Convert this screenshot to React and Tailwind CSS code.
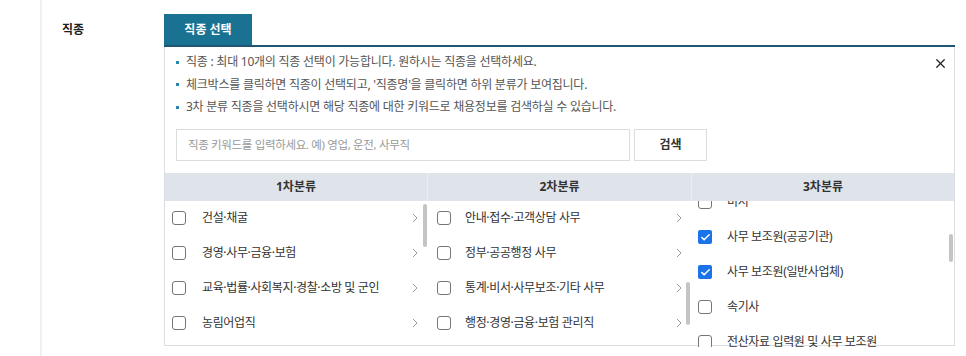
import { Check, X } from 'lucide-react';

const FONT = "font-['Noto_Sans','Noto_Sans_CJK_KR',sans-serif]";

const NOTES = [
  '직종 : 최대 10개의 직종 선택이 가능합니다. 원하시는 직종을 선택하세요.',
  "체크박스를 클릭하면 직종이 선택되고, '직종명'을 클릭하면 하위 분류가 보여집니다.",
  '3차 분류 직종을 선택하시면 해당 직종에 대한 키워드로 채용정보를 검색하실 수 있습니다.',
];

const FIRST = ['건설·채굴', '경영·사무·금융·보험', '교육·법률·사회복지·경찰·소방 및 군인', '농림어업직'];
const SECOND = ['안내·접수·고객상담 사무', '정부·공공행정 사무', '통계·비서·사무보조·기타 사무', '행정·경영·금융·보험 관리직'];
const THIRD = [
  { name: '비서', on: false },
  { name: '사무 보조원(공공기관)', on: true },
  { name: '사무 보조원(일반사업체)', on: true },
  { name: '속기사', on: false },
  { name: '전산자료 입력원 및 사무 보조원', on: false },
];

function Box({ on }) {
  if (on) {
    return (
      <span className="flex h-[14px] w-[14px] shrink-0 items-center justify-center rounded-[2px] bg-[#1a73e8]">
        <Check size={11} strokeWidth={3.5} className="text-white" />
      </span>
    );
  }
  return <span className="h-[14px] w-[14px] shrink-0 rounded-[3px] border border-[#767676] bg-white" />;
}

function Chevron() {
  return (
    <svg width="6" height="10" viewBox="0 0 6 10" className="ml-auto shrink-0">
      <polyline points="1,1 5,5 1,9" fill="none" stroke="#9a9a9a" strokeWidth="1" />
    </svg>
  );
}

function Row({ name, on, chevron, pad, gap }) {
  return (
    <div className={`flex h-[35px] items-center ${pad}`}>
      <Box on={on} />
      <span className={`${gap} whitespace-nowrap text-[12px] tracking-[-0.03em] text-[#333]`}>{name}</span>
      {chevron && <Chevron />}
    </div>
  );
}

export default function App() {
  return (
    <div className={`flex h-[356px] w-[966px] bg-white ${FONT}`}>
      <div className="w-[40px]" />
      <div className="flex flex-1 border-l-2 border-[#eef0f4]">
        <div className="w-[122px] pl-[20px] pt-[21px] text-[12px] font-bold text-[#222]">직종</div>

        <div className="w-[791px] pt-[14px]">
          {/* tab */}
          <div className="border-b-2 border-[#1f5673]">
            <div className="flex h-[31px] w-[88px] items-center justify-center bg-[#1a7292] text-[12px] font-bold text-white">
              직종 선택
            </div>
          </div>

          {/* panel */}
          <div className="relative h-[299px] border-x border-b border-[#dadde2]">
            <button className="absolute right-[6px] top-[9px] text-[#222]">
              <X size={15} strokeWidth={2} />
            </button>

            <ul className="pl-[11px] pt-[4px]">
              {NOTES.map((t) => (
                <li key={t} className="flex h-[22.5px] items-center text-[12px] tracking-[-0.02em] text-[#555]">
                  <span className="mr-[7px] h-[3px] w-[3px] bg-[#2a86a8]" />
                  {t}
                </li>
              ))}
            </ul>

            <div className="mt-[10px] flex gap-[4px] pl-[11px]">
              <div className="flex h-[32px] w-[454px] items-center border border-[#dcdcdc] px-[11px] text-[11.5px] tracking-[-0.03em] text-[#999]">
                직종 키워드를 입력하세요. 예) 영업, 운전, 사무직
              </div>
              <div className="flex h-[32px] w-[73px] items-center justify-center border border-[#dcdcdc] text-[12px] font-bold text-[#333]">
                검색
              </div>
            </div>

            {/* table */}
            <div className="mt-[12px] grid grid-cols-[263px_264px_1fr]">
              <div className="flex h-[28px] items-center justify-center border-r border-[#eceef2] bg-[#dfe3ea] text-[12px] font-bold text-[#333]">1차분류</div>
              <div className="flex h-[28px] items-center justify-center border-r border-[#eceef2] bg-[#dfe3ea] text-[12px] font-bold text-[#333]">2차분류</div>
              <div className="flex h-[28px] items-center justify-center bg-[#dfe3ea] text-[12px] font-bold text-[#333]">3차분류</div>

              <div className="relative h-[146px] overflow-hidden pr-[10px]">
                {FIRST.map((n) => (
                  <Row key={n} name={n} chevron pad="pl-[7px]" gap="ml-[16px]" />
                ))}
                <span className="absolute right-[1px] top-[3px] h-[43px] w-[4px] rounded-full bg-[#c4c4c4]" />
              </div>
              <div className="relative h-[146px] overflow-hidden pr-[10px]">
                {SECOND.map((n) => (
                  <Row key={n} name={n} chevron pad="pl-[9px]" gap="ml-[14px]" />
                ))}
                <span className="absolute right-[2px] top-[81px] h-[43px] w-[4px] rounded-full bg-[#c4c4c4]" />
              </div>
              <div className="relative h-[146px] overflow-hidden">
                <div className="-mt-[16px]">
                  {THIRD.map((r) => (
                    <Row key={r.name} name={r.name} on={r.on} pad="pl-[6px]" gap="ml-[15px]" />
                  ))}
                </div>
                <span className="absolute right-[1px] top-[33px] h-[28px] w-[4px] rounded-full bg-[#c4c4c4]" />
              </div>
            </div>
          </div>
        </div>
      </div>
    </div>
  );
}
